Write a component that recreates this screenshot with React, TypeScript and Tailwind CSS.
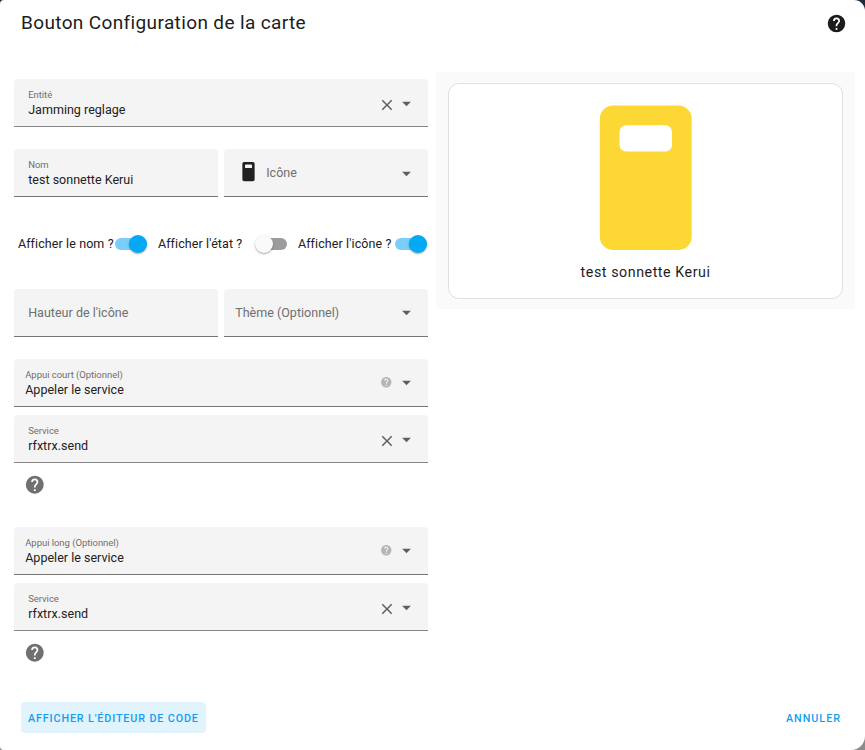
import type { ReactNode } from "react"

const HELP_PATH =
  "M15.07,11.25L14.17,12.17C13.45,12.89 13,13.5 13,15H11V14.5C11,13.39 11.45,12.39 12.17,11.67L13.41,10.41C13.78,10.05 14,9.55 14,9C14,7.89 13.1,7 12,7A2,2 0 0,0 10,9H8A4,4 0 0,1 12,5A4,4 0 0,1 16,9C16,9.88 15.64,10.67 15.07,11.25M13,19H11V17H13M12,2A10,10 0 0,0 2,12A10,10 0 0,0 12,22A10,10 0 0,0 22,12C22,6.47 17.5,2 12,2Z"
const CLOSE_PATH =
  "M19,6.41L17.59,5L12,10.59L6.41,5L5,6.41L10.59,12L5,17.59L6.41,19L12,13.41L17.59,19L19,17.59L13.41,12L19,6.41Z"
const ARROW_PATH = "M7,10L12,15L17,10H7Z"
const DEVICE_PATH =
  "M7,1H17A2,2 0 0,1 19,3V21A2,2 0 0,1 17,23H7A2,2 0 0,1 5,21V3A2,2 0 0,1 7,1M9,4A1,1 0 0,0 8,5V7A1,1 0 0,0 9,8H15A1,1 0 0,0 16,7V5A1,1 0 0,0 15,4H9Z"

function Icon({ path, className }: { path: string; className: string }) {
  return (
    <svg viewBox="0 0 24 24" fill="currentColor" className={`block shrink-0 ${className}`}>
      <path d={path} fillRule="evenodd" />
    </svg>
  )
}

interface FieldProps {
  label: string
  value?: string
  select?: boolean
  combo?: boolean
  leading?: ReactNode
  trailing?: ReactNode
}

function Field({ label, value, select, combo, leading, trailing }: FieldProps) {
  return (
    <div
      className={`flex h-12 items-start rounded-t-[4px] border-b bg-[#f4f4f4] ${
        combo ? "border-[#868686]" : "border-[#757575]"
      } ${select ? "pl-[10.8px]" : "pl-[13.8px]"}`}
    >
      {leading}
      {value ? (
        <div className="flex grow flex-col gap-px pt-[10px]">
          <span className="text-[9.5px] leading-3 tracking-[-0.04px] text-[#6f6f6f]">{label}</span>
          <span className="text-[12.5px] leading-4 tracking-[0.02px] text-[#212121]">{value}</span>
        </div>
      ) : (
        <span className="grow text-[12.5px] leading-[47px] tracking-[0.02px] text-[#6f6f6f]">{label}</span>
      )}
      {trailing}
    </div>
  )
}

function Arrow({ low }: { low?: boolean }) {
  return (
    <Icon path={ARROW_PATH} className={`mr-[10.6px] size-[21px] text-[#5f5f5f] ${low ? "mt-[14px]" : "mt-[13px]"}`} />
  )
}

function ClearAndArrow() {
  return (
    <>
      <Icon path={CLOSE_PATH} className="mt-[17px] size-[18px] text-[#5f5f5f]" />
      <Arrow low />
    </>
  )
}

function HelpAndArrow() {
  return (
    <>
      <Icon path={HELP_PATH} className="mt-[17px] mr-[3.8px] size-[12.5px] text-[#b5b5b5]" />
      <Arrow />
    </>
  )
}

function Toggle({ label, on }: { label: string; on?: boolean }) {
  return (
    <div className="flex w-[129.5px] items-center justify-between">
      <span className="text-[12.5px] leading-[18px] tracking-[0.1px] whitespace-nowrap text-[#212121]">{label}</span>
      <span className="relative flex h-[18px] w-8 shrink-0 items-center">
        <span className={`h-[12.5px] w-7 rounded-full ${on ? "bg-[#7bcef9]" : "ml-1 bg-[#9c9c9c]"}`} />
        <span
          className={`absolute top-0 size-[18px] rounded-full shadow-[0_1px_2px_rgba(0,0,0,0.35)] ${
            on ? "right-0 bg-[#03a9f4]" : "left-0 bg-[#fafafa]"
          }`}
        />
      </span>
    </div>
  )
}

function ActionEditor({ label }: { label: string }) {
  return (
    <div>
      <Field label={label} value="Appeler le service" select trailing={<HelpAndArrow />} />
      <div className="mt-2">
        <Field label="Service" value="rfxtrx.send" combo trailing={<ClearAndArrow />} />
      </div>
      <Icon path={HELP_PATH} className="mt-[11px] ml-[9.8px] size-[21.5px] text-[#707070]" />
    </div>
  )
}

export default function App() {
  return (
    <div className="h-[750px] w-[865px] bg-linear-to-b from-[#1d2b38] to-[#8c8c8c] font-['Roboto',sans-serif]">
      <div className="flex h-full flex-col rounded-tl-[4px] rounded-tr-[11px] rounded-br-[14px] rounded-bl-[4px] bg-white">
        <header className="flex h-[72px] items-start justify-between pt-[10px] pr-[18px] pl-[21px]">
          <h1 className="mt-px text-[19px] leading-6 tracking-[0.37px] text-[#1c1c1c]">
            Bouton Configuration de la carte
          </h1>
          <Icon path={HELP_PATH} className="mt-[2.5px] size-[21px] text-[#1c1c1c]" />
        </header>

        <main className="flex grow items-start pl-[14.4px]">
          <div className="flex w-[413.2px] flex-col gap-[22px] pt-[7px]">
            <Field label="Entité" value="Jamming reglage" combo trailing={<ClearAndArrow />} />
            <div className="grid grid-cols-2 gap-[6.8px]">
              <Field label="Nom" value="test sonnette Kerui" />
              <Field
                label="Icône"
                leading={<Icon path={DEVICE_PATH} className="mt-[12px] mr-[7px] size-[21px] text-[#212121]" />}
                trailing={<Arrow low />}
              />
            </div>
            <div className="flex h-12 items-center justify-between pt-[2px] pr-[0.2px] pl-[3.5px]">
              <Toggle label="Afficher le nom ?" on />
              <Toggle label="Afficher l'état ?" />
              <Toggle label="Afficher l'icône ?" on />
            </div>
            <div className="grid grid-cols-2 gap-[6.8px]">
              <Field label="Hauteur de l'icône" />
              <Field label="Thème (Optionnel)" select trailing={<Arrow />} />
            </div>
            <div className="flex flex-col gap-[31.5px]">
              <ActionEditor label="Appui court (Optionnel)" />
              <ActionEditor label="Appui long (Optionnel)" />
            </div>
          </div>

          <div className="ml-[8.2px] h-[237px] w-[419.6px] rounded-[3px] bg-[#fafafa] px-3 pt-[10.5px]">
            <div className="flex h-[216.5px] flex-col items-center rounded-[11px] border border-[#e0e0e0] bg-white pt-[15.5px]">
              <Icon path={DEVICE_PATH} className="size-[157.5px] text-[#fdd835]" />
              <span className="mt-[5.5px] text-[14.25px] leading-5 tracking-[0.55px] text-[#1c1c1c]">
                test sonnette Kerui
              </span>
            </div>
          </div>
        </main>

        <footer className="flex h-12 items-start justify-between pr-[24px] pl-[21px]">
          <button className="h-[31px] rounded-[4px] bg-[#e1f4fe] px-[7px] pt-[3px] text-[10.75px] font-medium tracking-[0.87px] text-[#109ff0]">
            AFFICHER L'ÉDITEUR DE CODE
          </button>
          <button className="h-[31px] pt-[3px] text-[10.75px] font-medium tracking-[1px] text-[#109ff0]">
            ANNULER
          </button>
        </footer>
      </div>
    </div>
  )
}
